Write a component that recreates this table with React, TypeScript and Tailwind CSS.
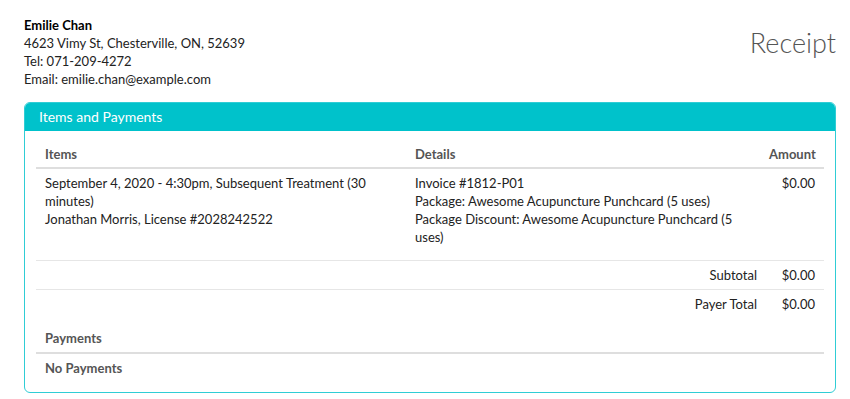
import React from 'react';

const font = { fontFamily: 'Lato, "Open Sans", sans-serif' };

const items = [
  {
    item: ['September 4, 2020 - 4:30pm, Subsequent Treatment (30 minutes)', 'Jonathan Morris, License #2028242522'],
    details: [
      'Invoice #1812-P01',
      'Package: Awesome Acupuncture Punchcard (5 uses)',
      'Package Discount: Awesome Acupuncture Punchcard (5 uses)',
    ],
    amount: '$0.00',
  },
];

const totals = [
  { label: 'Subtotal', value: '$0.00' },
  { label: 'Payer Total', value: '$0.00' },
];

const App: React.FC = () => {
  return (
    <div className="bg-white pl-[24px] pr-[14px] pt-[16px] text-[13px] leading-[18px] text-[#222]" style={font}>
      <div className="flex justify-between items-start">
        <div>
          <div className="font-bold text-black">Emilie Chan</div>
          <div>4623 Vimy St, Chesterville, ON, 52639</div>
          <div>Tel: 071-209-4272</div>
          <div>Email: emilie.chan@example.com</div>
        </div>
        <h1 className="text-[27px] leading-[30px] font-light text-[#555] mt-[12px]">Receipt</h1>
      </div>

      <div className="mt-[14px] rounded-[6px] border border-[#2fcdd5] overflow-hidden">
        <div className="bg-[#00c2cb] h-[28px] px-[14px] flex items-center text-white text-[14px] font-normal">
          Items and Payments
        </div>

        <div className="px-[11px] pt-[9px] pb-[10px]">
          <div className="grid grid-cols-[370px_1fr_64px] border-b-2 border-[#dedede] font-bold text-[#555]">
            <div className="px-[9px] pt-[5px] pb-[4px]">Items</div>
            <div className="px-[9px] pt-[5px] pb-[4px]">Details</div>
            <div className="px-[9px] pt-[5px] pb-[4px] text-right">Amount</div>
          </div>

          {items.map((row, i) => (
            <div key={i} className="grid grid-cols-[370px_1fr_64px] border-b border-[#e6e6e6]">
              <div className="px-[9px] pt-[5px] pb-[14px]">
                {row.item.map((t) => (
                  <div key={t}>{t}</div>
                ))}
              </div>
              <div className="px-[9px] pt-[5px] pb-[14px]">
                {row.details.map((t) => (
                  <div key={t}>{t}</div>
                ))}
              </div>
              <div className="px-[9px] pt-[5px] text-right">{row.amount}</div>
            </div>
          ))}

          {totals.map((t, i) => (
            <div
              key={t.label}
              className={`flex justify-end py-[5px] ${i === 0 ? 'border-b border-[#e6e6e6]' : ''}`}
            >
              <div className="pr-[9px]">{t.label}</div>
              <div className="pr-[9px] w-[58px] text-right">{t.value}</div>
            </div>
          ))}

          <div className="mt-[6px] border-b-2 border-[#dedede] px-[9px] pt-[5px] pb-[5px] font-bold text-[#555]">
            Payments
          </div>
          <div className="px-[9px] py-[5px] font-bold text-[#555]">No Payments</div>
        </div>
      </div>
    </div>
  );
};

export default App;
